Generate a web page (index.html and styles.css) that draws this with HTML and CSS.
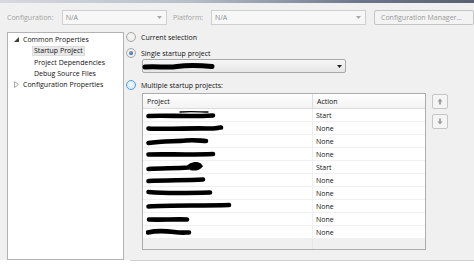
FILE: index.html
```html
<!DOCTYPE html>
<html>
<head>
<meta charset="utf-8">
<link rel="stylesheet" href="styles.css">
</head>
<body>
<div class="titlebar"></div>
<div class="toolbar">
  <span class="lbl lbl-config">Configuration:</span>
  <div class="combo combo-config"><span>N/A</span><svg class="carret" width="5" height="3" viewBox="0 0 5 3"><path d="M0 0H5L2.5 3Z" fill="#a8a8a8"/></svg></div>
  <span class="lbl lbl-platform">Platform:</span>
  <div class="combo combo-platform"><span>N/A</span><svg class="carret" width="5" height="3" viewBox="0 0 5 3"><path d="M0 0H5L2.5 3Z" fill="#a8a8a8"/></svg></div>
  <div class="btn-cm">Configuration Manager...</div>
</div>
<div class="main">
  <div class="tree">
    <div class="node parent"><svg class="tw" width="5" height="5" viewBox="0 0 5 5"><path d="M5 0V5H0Z" fill="#404040"/></svg>Common Properties</div>
    <div class="node child"><span class="sel">Startup Project</span></div>
    <div class="node child">Project Dependencies</div>
    <div class="node child">Debug Source Files</div>
    <div class="node parent"><svg class="tw" width="5" height="7" viewBox="0 0 5 7"><path d="M0.5 0.5L4.5 3.5L0.5 6.5Z" fill="none" stroke="#a8a8a8" stroke-width="1"/></svg>Configuration Properties</div>
  </div>
  <div class="content">
    <div class="radio-row r1"><span class="radio"></span>Current selection</div>
    <div class="radio-row r2"><span class="radio checked"></span>Single startup project</div>
    <div class="dropdown">
      <svg class="scrib" width="80" height="10" viewBox="0 0 80 10"><path d="M3 6 C15 5 25 7 35 5.5 S 55 4 70 5.5" stroke="#000" stroke-width="5" fill="none" stroke-linecap="round"/></svg>
      <svg class="carret" width="5" height="3" viewBox="0 0 5 3"><path d="M0 0H5L2.5 3Z" fill="#202020"/></svg>
    </div>
    <div class="radio-row r3"><span class="radio hover"></span>Multiple startup projects:</div>
    <div class="grid-area">
      <div class="grid">
        <div class="hdr"><div class="c1">Project</div><div class="c2">Action</div></div>
        <div class="row"><div class="c1"><svg width="100" height="12" viewBox="0 0 100 12"><path d="M2.5 7 C20 6 40 8 67 6.5" stroke="#000" stroke-width="4.6" fill="none" stroke-linecap="round"/><path d="M34 3 C45 2 55 3 62 3" stroke="#000" stroke-width="1.3" fill="none" stroke-linecap="round"/></svg></div><div class="c2">Start</div></div>
        <div class="row"><div class="c1"><svg width="100" height="12" viewBox="0 0 100 12"><path d="M2.5 6.5 C20 7.5 45 6 60 6.5 S 72 5 75 5.5" stroke="#000" stroke-width="4.6" fill="none" stroke-linecap="round"/></svg></div><div class="c2">None</div></div>
        <div class="row"><div class="c1"><svg width="100" height="12" viewBox="0 0 100 12"><path d="M2.5 8 C15 6 30 6.5 40 5.5 S 55 6 60 6" stroke="#000" stroke-width="4.6" fill="none" stroke-linecap="round"/></svg></div><div class="c2">None</div></div>
        <div class="row"><div class="c1"><svg width="100" height="12" viewBox="0 0 100 12"><path d="M2.5 6.5 C20 6 45 7 67 6" stroke="#000" stroke-width="4.6" fill="none" stroke-linecap="round"/></svg></div><div class="c2">None</div></div>
        <div class="row"><div class="c1"><svg width="100" height="12" viewBox="0 0 100 12"><path d="M2.5 8 C15 7 30 7.5 42 6.5 C46 3 52 2 54 5 C52 7 48 7.5 45 7" stroke="#000" stroke-width="4.6" fill="none" stroke-linecap="round"/></svg></div><div class="c2">Start</div></div>
        <div class="row"><div class="c1"><svg width="100" height="12" viewBox="0 0 100 12"><path d="M2.5 7 C20 6 40 6.5 57 5.5" stroke="#000" stroke-width="4.6" fill="none" stroke-linecap="round"/></svg></div><div class="c2">None</div></div>
        <div class="row"><div class="c1"><svg width="100" height="12" viewBox="0 0 100 12"><path d="M2.5 5 C20 6.5 45 6 64 5.5" stroke="#000" stroke-width="4.6" fill="none" stroke-linecap="round"/></svg></div><div class="c2">None</div></div>
        <div class="row"><div class="c1"><svg width="100" height="12" viewBox="0 0 100 12"><path d="M2.5 6.5 C25 5 55 6 83 5" stroke="#000" stroke-width="4.6" fill="none" stroke-linecap="round"/></svg></div><div class="c2">None</div></div>
        <div class="row"><div class="c1"><svg width="100" height="12" viewBox="0 0 100 12"><path d="M3 6.5 C15 7 30 6 41 6.5" stroke="#000" stroke-width="4.6" fill="none" stroke-linecap="round"/></svg></div><div class="c2">None</div></div>
        <div class="row"><div class="c1"><svg width="100" height="12" viewBox="0 0 100 12"><path d="M2 6.5 C10 4.5 20 5 28 6 S 38 6.5 43 6.5" stroke="#000" stroke-width="4.6" fill="none" stroke-linecap="round"/></svg></div><div class="c2">None</div></div>
        <div class="filler"><div class="c1"></div><div class="c2"></div></div>
      </div>
      <div class="side-btns">
        <div class="sbtn"><svg width="6" height="7" viewBox="0 0 6 7"><path d="M3 0.5L5.5 3.5H3.9V6.5H2.1V3.5H0.5Z" fill="#9a9a9a"/></svg></div>
        <div class="sbtn"><svg width="6" height="7" viewBox="0 0 6 7"><path d="M3 6.5L5.5 3.5H3.9V0.5H2.1V3.5H0.5Z" fill="#9a9a9a"/></svg></div>
      </div>
    </div>
  </div>
</div>
<div class="footer"><div class="footer-line"></div></div>
</body>
</html>
```

FILE: styles.css
```css
html, body {
  margin: 0;
  padding: 0;
}
body {
  width: 474px;
  height: 279px;
  overflow: hidden;
  background: #f0f0f0;
  font-family: "Open Sans", "Liberation Sans", sans-serif;
  font-size: 7px;
  color: #111;
}
.titlebar {
  height: 3px;
  background: linear-gradient(to right, #d6d9de 0%, #b9bfc8 40%, #6f7889 75%, #5a6070 100%);
}
.toolbar {
  display: flex;
  align-items: center;
  height: 15px;
  margin-top: 7px;
  padding-left: 7px;
  white-space: nowrap;
}
.lbl {
  color: #a4a4a4;
}
.lbl-config { width: 55px; }
.lbl-platform { width: 38px; margin-left: 6px; }
.combo {
  box-sizing: border-box;
  height: 15px;
  border: 1px solid #cfcfcf;
  background: #f7f7f7;
  color: #8c8c8c;
  display: flex;
  align-items: center;
  justify-content: space-between;
  padding: 0 4px 0 3px;
}
.combo-config { width: 106px; }
.combo-platform { width: 156px; }
.btn-cm {
  box-sizing: border-box;
  margin-left: 8px;
  width: 100px;
  flex-shrink: 0;
  height: 15px;
  border: 1px solid #c4c4c4;
  border-radius: 2px;
  background: #f3f3f3;
  color: #9a9a9a;
  display: flex;
  align-items: center;
  padding-left: 6px;
}
.main {
  display: flex;
  height: 228px;
  margin-top: 7px;
}
.tree {
  box-sizing: border-box;
  margin-left: 7px;
  width: 117px;
  height: 228px;
  border: 1px solid #b2b2b2;
  background: #fff;
  padding-top: 1px;
}
.node {
  height: 11.25px;
  line-height: 11.25px;
  white-space: nowrap;
  display: flex;
  align-items: center;
}
.node.parent { padding-left: 6px; }
.node.parent .tw { margin-right: 4px; }
.node.child { padding-left: 26px; }
.sel {
  background: #e8e8e8;
  border: 1px solid #dcdcdc;
  padding: 0 1px;
  line-height: 8px;
  margin-left: -2px;
}
.content {
  margin-left: 2px;
  display: flex;
  flex-direction: column;
}
.radio-row {
  display: flex;
  align-items: center;
  height: 10px;
  white-space: nowrap;
}
.r2 { margin-top: 6px; }
.r3 { margin-top: 7px; }
.radio {
  box-sizing: border-box;
  width: 10px;
  height: 10px;
  border-radius: 50%;
  border: 1px solid #ababab;
  background: radial-gradient(circle at 50% 45%, #fdfdfd 0%, #e0e0e0 100%);
  margin-right: 5px;
  position: relative;
}
.radio.checked::after {
  content: "";
  position: absolute;
  left: 2px;
  top: 2px;
  width: 4px;
  height: 4px;
  border-radius: 50%;
  background: radial-gradient(circle at 40% 35%, #8fb4d8 0%, #2a5d8f 70%);
}
.radio.hover {
  border-color: #5f9ccc;
  background: radial-gradient(circle at 50% 45%, #f2f9ff 0%, #c6e2f8 100%);
}
.dropdown {
  box-sizing: border-box;
  margin-top: 1px;
  margin-left: 16px;
  width: 204px;
  height: 14px;
  border: 1px solid #a9a9a9;
  border-radius: 2px;
  background: linear-gradient(#f6f6f6, #e6e6e6);
  display: flex;
  align-items: center;
  justify-content: space-between;
  padding-right: 3px;
}
.dropdown .scrib { margin-left: -1px; }
.grid-area {
  display: flex;
  margin-top: 3px;
  margin-left: 16px;
}
.grid {
  box-sizing: border-box;
  width: 284px;
  height: 157px;
  border: 1px solid #adadad;
  background: #f0f0f0;
  display: flex;
  flex-direction: column;
}
.hdr {
  display: flex;
  height: 14px;
  background: linear-gradient(#ffffff, #f3f3f3);
  border-bottom: 1px solid #dcdcdc;
}
.hdr .c1, .hdr .c2 {
  display: flex;
  align-items: center;
  padding-left: 4px;
}
.hdr .c1 { border-right: 1px solid #dedede; }
.c1 { width: 170px; box-sizing: border-box; }
.c2 { width: 112px; box-sizing: border-box; }
.row {
  display: flex;
  height: 13px;
  background: #fff;
  box-sizing: border-box;
  border-bottom: 1px solid #f0f0f0;
}
.row .c1 {
  border-right: 1px solid #efefef;
  display: flex;
  align-items: center;
  padding-left: 3px;
}
.row .c2 {
  display: flex;
  align-items: center;
  padding-left: 3px;
}
.filler {
  flex: 1;
  display: flex;
}
.filler .c1 { border-right: 1px solid #e6e6e6; }
.side-btns {
  display: flex;
  flex-direction: column;
  margin-left: 6px;
  margin-top: 1px;
  gap: 5px;
}
.sbtn {
  box-sizing: border-box;
  width: 16px;
  height: 15px;
  border: 1px solid #c6c6c6;
  border-radius: 2px;
  background: #f4f4f4;
  display: flex;
  align-items: center;
  justify-content: center;
}
.footer {
  height: 19px;
  background: #fff;
}
.footer-line {
  margin-left: 130px;
  height: 1px;
  background: #d2d2d2;
}
```
